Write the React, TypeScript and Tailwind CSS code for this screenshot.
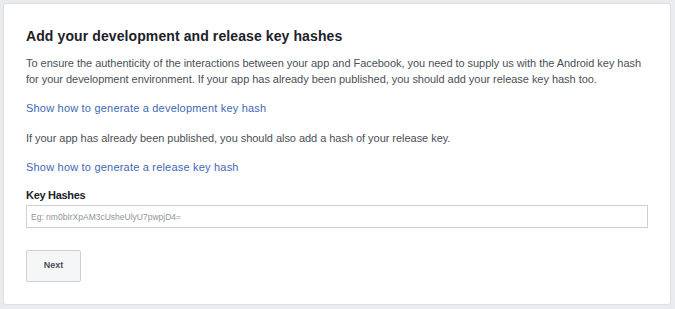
export default function App() {
  return (
    <div className="min-h-[309px] w-[675px] bg-[#e9ebee] pt-[3px] pl-[3px] pr-[4px] pb-[4px] font-['Liberation_Sans',Arial,sans-serif]">
      <div className="h-[302px] rounded-[3px] border border-[#dddfe2] bg-white px-[22px] pt-[23px]">
        <h2 className="text-[14px] font-bold leading-[18px] tracking-[0.1px] text-[#1d2129]">
          Add your development and release key hashes
        </h2>
        <p className="mt-[10px] text-[11px] leading-[16px] tracking-[-0.04px] text-[#4b4f56]">
          To ensure the authenticity of the interactions between your app and Facebook, you need to supply us with the Android key hash for your development environment. If your app has already been published, you should add your release key hash too.
        </p>
        <a href="#" className="mt-[13px] block text-[11px] leading-[16px] tracking-[0.2px] text-[#4267b2]">
          Show how to generate a development key hash
        </a>
        <p className="mt-[14px] text-[11px] leading-[16px] tracking-[-0.04px] text-[#4b4f56]">
          If your app has already been published, you should also add a hash of your release key.
        </p>
        <a href="#" className="mt-[13px] block text-[11px] leading-[16px] tracking-[0.2px] text-[#4267b2]">
          Show how to generate a release key hash
        </a>
        <div className="mt-[12px] text-[11px] font-bold leading-[16px] tracking-[-0.3px] text-[#1d2129]">Key Hashes</div>
        <input
          className="mt-[2px] block h-[23px] w-[622px] border border-[#ccd0d5] px-[4px] text-[8.5px] text-[#4b4f56] outline-none placeholder:text-[#90949c]"
          placeholder="Eg: nm0bIrXpAM3cUsheUlyU7pwpjD4="
        />
        <button className="mt-[22px] flex h-[32px] w-[55px] items-center justify-center rounded-[2px] border border-[#ccd0d5] bg-[#f5f6f7] text-[9px] font-bold text-[#4b4f56]">
          Next
        </button>
      </div>
    </div>
  );
}
